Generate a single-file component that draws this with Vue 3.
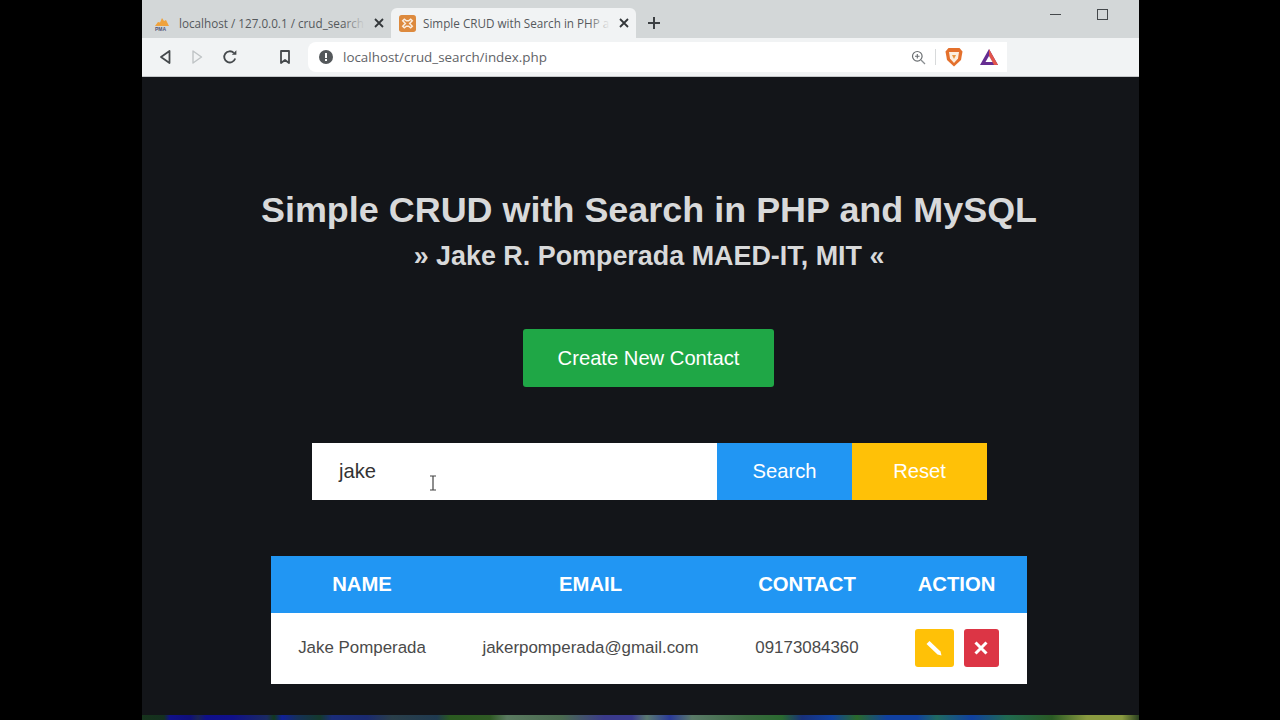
<script setup>
const rows = [
  { name: "Jake Pomperada", email: "jakerpomperada@gmail.com", contact: "09173084360" },
]
</script>

<template>
  <div class="screen">
    <div class="window">
      <div class="tabstrip">
        <div class="tab">
          <svg class="favicon" viewBox="0 0 16 16" width="16" height="16">
            <path d="M1 11 L4 7 L6 7.5 L8 3 L10 6 L12 5 L15 11 Z" fill="#efa23c" />
            <text x="1" y="15.5" font-size="5" font-weight="700" font-family="Liberation Sans" fill="#4f5578">PMA</text>
          </svg>
          <span class="tab-title">localhost / 127.0.0.1 / crud_search</span>
          <span class="tab-fade"></span>
          <svg class="tab-close" viewBox="0 0 10 10" width="10" height="10">
            <path d="M1 1 L9 9 M9 1 L1 9" stroke="#33373a" stroke-width="1.8" />
          </svg>
        </div>
        <div class="tab active">
          <svg class="favicon" viewBox="0 0 16 16" width="17" height="17">
            <rect width="16" height="16" rx="2.5" fill="#dd8a3e" />
            <path d="M5 4 L3.5 5.5 L6 8 L3.5 10.5 L5 12 L7 10.5 H9 L11 12 L12.5 10.5 L10 8 L12.5 5.5 L11 4 L9 5.5 H7 Z" fill="none" stroke="#fbeee0" stroke-width="1.4" />
          </svg>
          <span class="tab-title">Simple CRUD with Search in PHP a</span>
          <span class="tab-fade"></span>
          <svg class="tab-close" viewBox="0 0 10 10" width="10" height="10">
            <path d="M1 1 L9 9 M9 1 L1 9" stroke="#33373a" stroke-width="1.8" />
          </svg>
        </div>
        <svg class="new-tab" viewBox="0 0 14 14" width="14" height="14">
          <path d="M7 1 V13 M1 7 H13" stroke="#3b3f42" stroke-width="2" />
        </svg>
        <div class="win-buttons">
          <span class="win-min"></span>
          <span class="win-max"></span>
        </div>
      </div>

      <div class="toolbar">
        <div class="nav">
          <svg viewBox="0 0 14 16" width="14" height="16">
            <path d="M11.5 2 L3 8 L11.5 14 Z" fill="none" stroke="#45494c" stroke-width="1.8" stroke-linejoin="round" />
          </svg>
          <svg viewBox="0 0 14 16" width="14" height="16">
            <path d="M3 2 L11.5 8 L3 14 Z" fill="none" stroke="#bfc3c5" stroke-width="1.4" stroke-linejoin="round" />
          </svg>
          <svg viewBox="0 0 16 16" width="16" height="16">
            <path d="M13.2 9.5 A5.6 5.6 0 1 1 11.8 3.9" fill="none" stroke="#45494c" stroke-width="1.8" />
            <path d="M9.8 5.8 H14.4 V1.2 Z" fill="#45494c" />
          </svg>
          <svg class="bookmark" viewBox="0 0 12 16" width="12" height="16">
            <path d="M2 2 H10 V14 L6 11 L2 14 Z" fill="none" stroke="#45494c" stroke-width="1.8" stroke-linejoin="round" />
          </svg>
        </div>
        <div class="omnibox">
          <svg viewBox="0 0 14 14" width="14" height="14">
            <circle cx="7" cy="7" r="7" fill="#54585b" />
            <rect x="6" y="3" width="2" height="5" fill="#fff" />
            <rect x="6" y="9" width="2" height="2" fill="#fff" />
          </svg>
          <span class="url">localhost/crud_search/index.php</span>
          <svg class="zoom-icon" viewBox="0 0 15 15" width="15" height="15">
            <circle cx="6.3" cy="6.3" r="4.8" fill="none" stroke="#6a6e71" stroke-width="1.2" />
            <path d="M4 6.3 H8.6 M6.3 4 V8.6" stroke="#6a6e71" stroke-width="1.1" />
            <path d="M10 10 L14 14" stroke="#8a8e91" stroke-width="1.2" />
          </svg>
          <span class="divider"></span>
          <svg viewBox="0 0 18 20" width="18" height="20">
            <path d="M3.5 1 H14.5 L17.5 4.5 L16 13 L9 19.5 L2 13 L0.5 4.5 Z" fill="#e4702c" />
            <path d="M4 5 H14 L13 11.5 L9 16 L5 11.5 Z" fill="#fbeede" />
            <path d="M7 8 H11 L9 12 Z" fill="#e9963f" />
          </svg>
          <svg class="bat" viewBox="0 0 20 18" width="20" height="18">
            <path d="M10 1 L19 17 H1 Z" fill="#662d91" />
            <path d="M10 1 L19 17 H15 L10 8 Z" fill="#e2554a" />
            <path d="M10 8 L13.5 14 H6.5 Z" fill="#fff" />
          </svg>
        </div>
      </div>

      <main class="page">
        <h1>Simple CRUD with Search in PHP and MySQL</h1>
        <h2>» Jake R. Pomperada MAED-IT, MIT «</h2>
        <button class="create">Create New Contact</button>

        <form class="search" @submit.prevent>
          <div class="search-input">
            <span>jake</span>
            <svg class="ibeam" viewBox="0 0 8 16" width="8" height="16">
              <path d="M1 1 H7 M4 1 V15 M1 15 H7" stroke="#444" stroke-width="1.2" fill="none" />
            </svg>
          </div>
          <button class="btn-search">Search</button>
          <button class="btn-reset">Reset</button>
        </form>

        <table>
          <thead>
            <tr>
              <th class="col-name">NAME</th>
              <th class="col-email">EMAIL</th>
              <th class="col-contact">CONTACT</th>
              <th class="col-action">ACTION</th>
            </tr>
          </thead>
          <tbody>
            <tr v-for="row in rows" :key="row.email">
              <td>{{ row.name }}</td>
              <td>{{ row.email }}</td>
              <td>{{ row.contact }}</td>
              <td>
                <div class="actions">
                  <span class="act edit">
                    <svg viewBox="0 0 18 18" width="18" height="18">
                      <path d="M1.5 5 L4.5 2 L15.5 12.5 L16.5 16.5 L12.5 15.5 Z" fill="#fff" />
                    </svg>
                  </span>
                  <span class="act del">
                    <svg viewBox="0 0 16 16" width="16" height="16">
                      <path d="M2.5 2.5 L13.5 13.5 M13.5 2.5 L2.5 13.5" stroke="#fff" stroke-width="3" />
                    </svg>
                  </span>
                </div>
              </td>
            </tr>
          </tbody>
        </table>
      </main>

      <div class="desktop"></div>
    </div>
  </div>
</template>

<style>
html,
body {
  background: #000;
}
</style>

<style scoped>
.screen {
  width: 1280px;
  height: 720px;
  background: #000;
  overflow: hidden;
  display: flex;
  justify-content: center;
  padding-left: 1px;
  box-sizing: border-box;
  font-family: "Liberation Sans", Arial, sans-serif;
}

.window {
  width: 997px;
  height: 720px;
  display: flex;
  flex-direction: column;
}

/* browser chrome */
.tabstrip {
  height: 38px;
  flex: none;
  background: #d3d7d8;
  display: flex;
  align-items: flex-end;
  padding-left: 4px;
  position: relative;
}

.tab {
  width: 245px;
  height: 30px;
  display: flex;
  align-items: center;
  padding: 0 4px 0 8px;
  box-sizing: border-box;
  position: relative;
  font-family: "Open Sans", "Noto Sans", sans-serif;
  font-size: 11.7px;
  color: #55595c;
}

.tab.active {
  background: #f1f3f4;
  border-radius: 6px 6px 0 0;
}

.tab-title {
  flex: 1;
  margin-left: 9px;
  white-space: nowrap;
  overflow: hidden;
  line-height: 30px;
}

.tab.active .tab-title {
  margin-left: 7px;
}

.tab-fade {
  width: 22px;
  height: 20px;
  margin-left: -22px;
  background: linear-gradient(to right, rgba(211, 215, 216, 0), #d3d7d8);
  flex: none;
}

.tab.active .tab-fade {
  background: linear-gradient(to right, rgba(241, 243, 244, 0), #f1f3f4);
}

.tab-close {
  flex: none;
  margin: 0 3px 0 9px;
}

.new-tab {
  align-self: center;
  margin: 8px 0 0 11px;
}

.win-buttons {
  margin-left: auto;
  display: flex;
  align-items: center;
  align-self: flex-start;
  gap: 36px;
  padding: 9px 31px 0 0;
}

.win-min {
  width: 11px;
  height: 1px;
  background: #44484b;
}

.win-max {
  width: 9px;
  height: 9px;
  border: 1px solid #44484b;
}

.toolbar {
  height: 38px;
  flex: none;
  background: #f1f3f4;
  border-bottom: 1px solid #c4c7c9;
  display: flex;
  align-items: center;
}

.nav {
  display: flex;
  align-items: center;
  gap: 18px;
  padding-left: 16px;
  width: 150px;
  box-sizing: border-box;
  flex: none;
}

.bookmark {
  margin-left: 23px;
}

.omnibox {
  width: 699px;
  height: 30px;
  background: #fff;
  border-radius: 8px 0 0 8px;
  display: flex;
  align-items: center;
  padding: 0 8px 0 11px;
  box-sizing: border-box;
  margin-left: 16px;
}

.url {
  margin-left: 10px;
  font-family: "Open Sans", "Noto Sans", sans-serif;
  font-size: 13.4px;
  color: #5f6367;
  flex: 1;
}

.zoom-icon {
  margin-right: 9px;
}

.divider {
  width: 1px;
  height: 16px;
  background: #d8dadb;
  margin-right: 9px;
}

.bat {
  margin-left: 16px;
}

/* page */
.page {
  flex: 1;
  background: #131519;
  display: flex;
  flex-direction: column;
  align-items: center;
  padding: 113px 0 0 18px;
  min-height: 0;
}

h1 {
  margin: 0 1px 0 0;
  font-size: 35.95px;
  line-height: 40px;
  font-weight: 700;
  color: #d8d9da;
}

h2 {
  margin: 10px 1px 0 0;
  font-size: 26.9px;
  line-height: 32px;
  font-weight: 700;
  color: #d8d9da;
}

button {
  border: none;
  font-family: inherit;
  color: #fff;
  font-size: 20.2px;
  padding: 0;
}

.create {
  margin-top: 57px;
  margin-right: 2px;
  width: 251px;
  height: 58px;
  background: #1fa746;
  border-radius: 3px;
}

.search {
  margin-top: 56px;
  display: flex;
  height: 57px;
  width: 675px;
}

.search-input {
  width: 405px;
  background: #fff;
  color: #333;
  font-size: 20.2px;
  padding-left: 27px;
  box-sizing: border-box;
  display: flex;
  align-items: center;
  position: relative;
}

.ibeam {
  position: absolute;
  left: 117px;
  top: 32px;
}

.btn-search {
  width: 135px;
  background: #2196f3;
}

.btn-reset {
  width: 135px;
  background: #ffc107;
}

table {
  margin-top: 56px;
  margin-right: 2px;
  width: 756px;
  border-collapse: collapse;
  table-layout: fixed;
  background: #fff;
  font-size: 16.9px;
}

th {
  height: 57px;
  padding: 0;
  background: #2196f3;
  color: #fff;
  font-size: 20.3px;
  font-weight: 700;
}

td {
  height: 70px;
  padding: 0 0 1px;
  text-align: center;
  color: #4a4a4a;
}

.col-name {
  width: 183px;
}

.col-email {
  width: 274px;
}

.col-contact {
  width: 159px;
}

.actions {
  display: flex;
  justify-content: center;
  gap: 10px;
}

.act {
  height: 38px;
  border-radius: 3px;
  display: flex;
  align-items: center;
  justify-content: center;
}

.edit {
  width: 39px;
  background: #ffc107;
}

.del {
  width: 35px;
  background: #dc3545;
}

/* sliver of desktop wallpaper under the browser */
.desktop {
  height: 5px;
  flex: none;
  background: linear-gradient(
    to right,
    #16331c 0,
    #14301f 22px,
    #10108a 28px,
    #0f0f7a 48px,
    #1a2454 56px,
    #0f0f8a 64px,
    #10108a 90px,
    #1a2a62 125px,
    #123a1c 132px,
    #10209a 140px,
    #15305a 155px,
    #143a2c 178px,
    #1a2c7a 190px,
    #1a2a70 225px,
    #2a3f4a 250px,
    #1f3a50 295px,
    #2a5a20 308px,
    #2f5a24 348px,
    #5a7a60 365px,
    #4a6a50 420px,
    #3a3a8a 462px,
    #3a3a90 490px,
    #5a7a70 505px,
    #2a3a9a 528px,
    #5a7a68 550px,
    #3a6a40 605px,
    #2a6a30 640px,
    #18307a 660px,
    #1040a0 690px,
    #2a6a2a 715px,
    #1040a0 745px,
    #1040a0 775px,
    #206a60 795px,
    #1040a0 830px,
    #206a50 865px,
    #2a5a24 910px,
    #8a9a40 945px,
    #8a9a40 980px,
    #2a4020 997px
  );
}
</style>
